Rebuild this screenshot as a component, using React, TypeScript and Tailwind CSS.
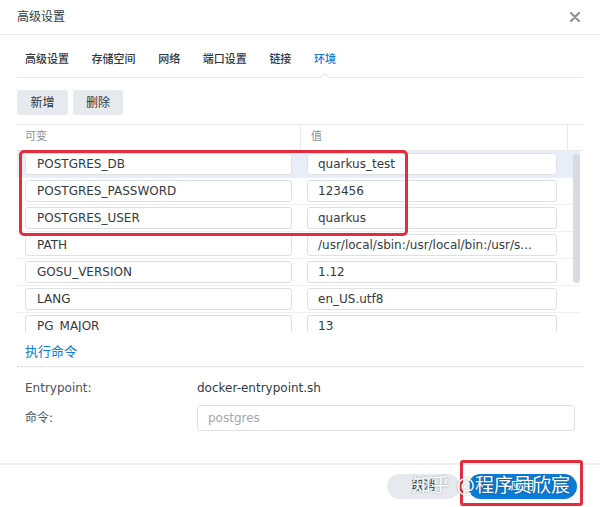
import React from 'react';

const rows = [
  { name: 'POSTGRES_DB', value: 'quarkus_test' },
  { name: 'POSTGRES_PASSWORD', value: '123456' },
  { name: 'POSTGRES_USER', value: 'quarkus' },
  { name: 'PATH', value: '/usr/local/sbin:/usr/local/bin:/usr/s...' },
  { name: 'GOSU_VERSION', value: '1.12' },
  { name: 'LANG', value: 'en_US.utf8' },
  { name: 'PG_MAJOR', value: '13' },
];

const tabs = ['高级设置', '存储空间', '网络', '端口设置', '链接', '环境'];

export default function App() {
  return (
    <div
      className="relative w-[600px] h-[507px] bg-white overflow-hidden flex flex-col text-[#333a42]"
      style={{ fontFamily: '"DejaVu Sans", "Noto Sans CJK SC", sans-serif' }}
    >
      {/* Header */}
      <div className="h-[35px] shrink-0 flex items-center justify-between px-[17px] border-b border-[#e8eaed]">
        <span className="text-[12px]">高级设置</span>
        <svg width="10" height="10" viewBox="0 0 10 10" className="mr-[3px]">
          <path d="M1 1 L9 9 M9 1 L1 9" stroke="#8a8f96" strokeWidth="2" strokeLinecap="round" />
        </svg>
      </div>

      <div className="flex-1 px-[17px]">
        {/* Tabs */}
        <div className="relative h-[43px] flex items-end gap-[22.6px] pl-2 pb-[9px] border-b border-[#e4e7eb]">
          {tabs.map((t) => (
            <span
              key={t}
              className={
                'text-[11px] leading-4 font-medium ' +
                (t === '环境' ? 'text-[#0a7bd6]' : 'text-[#2f363d]')
              }
            >
              {t}
            </span>
          ))}
          <div className="absolute left-[304px] bottom-[-4px] w-[7px] h-[7px] rotate-45 bg-white border-l border-t border-[#e4e7eb]" />
        </div>

        {/* Buttons */}
        <div className="flex gap-[5px] mt-[12px]">
          <button className="w-[51px] h-[25px] rounded-[3px] bg-[#e6eaef] text-[12px] text-[#2f363d]">新增</button>
          <button className="w-[50px] h-[25px] rounded-[3px] bg-[#e6eaef] text-[12px] text-[#2f363d]">删除</button>
        </div>

        {/* Table */}
        <div className="relative mt-[9px] border-t border-[#e6e9ed]">
          <div className="grid grid-cols-[283px_267px_16px] h-[26px] border-b border-[#e6e9ed] text-[11px] text-[#8b9096]">
            <div className="flex items-center pl-2">可变</div>
            <div className="flex items-center pl-[10px] border-l border-[#e6e9ed]">值</div>
            <div className="border-l border-[#e6e9ed]" />
          </div>
          <div className="relative h-[181px] overflow-hidden">
            {rows.map((r, i) => (
              <div
                key={r.name}
                className={
                  'flex items-center h-[27px] w-[563px] border-b border-[#eef0f2] ' +
                  (i === 0 ? 'bg-[#e7eef8]' : '')
                }
              >
                <div className="w-[283px] pl-2">
                  <div className="w-[267px] h-[22px] flex items-center pl-[11px] rounded-[3px] border border-[#dde1e6] bg-white text-[12px]">
                    {r.name}
                  </div>
                </div>
                <div className="pl-[7px]">
                  <div className="w-[250px] h-[22px] flex items-center pl-[10px] rounded-[3px] border border-[#dde1e6] bg-white text-[12px] whitespace-nowrap overflow-hidden">
                    {r.value}
                  </div>
                </div>
              </div>
            ))}
            <div className="absolute left-[556px] top-[3px] w-[7px] h-[129px] rounded-full bg-[#d8dce1]" />
          </div>
          {/* highlight box */}
          <div className="absolute left-[2px] top-[25px] w-[389px] h-[86px] border-[3px] border-[#e32d3c] rounded-[5px]" />
        </div>

        {/* Command section */}
        <div className="mt-[11px] pl-2 pb-[5px] border-b border-dotted border-[#c9ced4] text-[13px] leading-[18px] text-[#0a7bd6]">
          执行命令
        </div>
        <div className="flex items-center pl-2 mt-[12px] h-[18px] text-[12px]">
          <span className="w-[172px] text-[#4a5158]">Entrypoint:</span>
          <span>docker-entrypoint.sh</span>
        </div>
        <div className="flex items-center pl-2 mt-[8px] text-[12px]">
          <span className="w-[172px] text-[#4a5158]">命令:</span>
          <div className="w-[378px] h-[26px] flex items-center pl-[10px] rounded-[3px] border border-[#dde1e6] text-[#a3a8ae]">
            postgres
          </div>
        </div>
      </div>

      {/* Footer */}
      <div className="h-[44px] shrink-0 border-t-2 border-[#eeeff1] flex items-center justify-end gap-[8px] pr-[23px]">
        <button className="w-[73px] h-[25px] rounded-full bg-[#e6eaef] text-[12px] text-[#2f363d]">取消</button>
        <button className="w-[109px] h-[25px] rounded-full bg-[#0a7bd6] text-[12px] text-white">应用</button>
      </div>
      <div className="absolute left-[460px] top-[460px] w-[123px] h-[46px] border-[3px] border-[#e32d3c] rounded-[3px]" />

      {/* watermark */}
      <div className="absolute left-[412px] top-[473px] text-[19px] leading-[24px] text-white whitespace-nowrap [text-shadow:0_0_2px_rgba(0,0,0,0.4)]">
        知乎 @程序员欣宸
      </div>
    </div>
  );
}
